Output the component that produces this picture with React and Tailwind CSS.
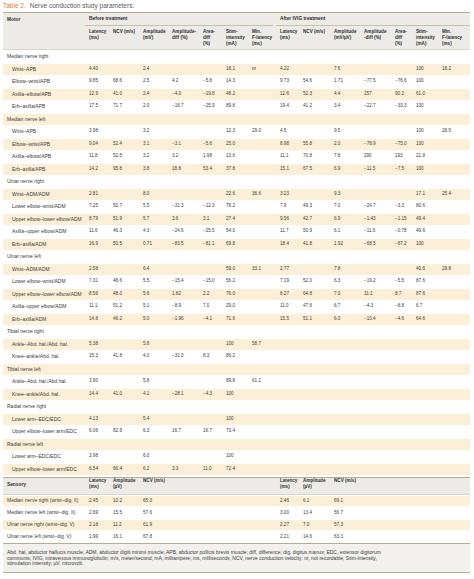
const COLS =
  'grid grid-cols-[82px_24px_30px_29px_31px_23px_26px_28px_23px_31px_30px_31px_21px_26px_32px] items-center'

const motor = [
  {
    title: 'Median nerve right',
    rows: [
      ['Wrist–APB', '4.40', '', '2.4', '', '', '18.1', 'nr', '4.22', '', '7.6', '', '', '100', '18.2'],
      ['Elbow–wrist/APB', '9.85', '68.6', '2.5', '4.2', '−5.6', '14.3', '', '9.73', '54.6', '1.71', '−77.5', '−76.6', '100', ''],
      ['Axilla–elbow/APB', '12.9', '41.0', '2.4', '−4.0', '−19.8', '48.2', '', '12.6', '52.3', '4.4', '157', '90.2', '61.0', ''],
      ['Erb–axilla/APB', '17.5', '71.7', '2.0', '−16.7', '−25.9', '89.8', '', '19.4', '41.2', '3.4', '−22.7', '−33.3', '100', ''],
    ],
  },
  {
    title: 'Median nerve left',
    rows: [
      ['Wrist–APB', '3.98', '', '3.2', '', '', '12.3', '29.0', '4.5', '', '9.5', '', '', '100', '28.5'],
      ['Elbow–wrist/APB', '9.04', '52.4', '3.1', '−3.1', '−5.6', '25.0', '', '8.98', '55.8', '2.0', '−78.9', '−75.0', '100', ''],
      ['Axilla–elbow/APB', '11.8', '52.5', '3.2', '3.2', '1.98', '13.6', '', '11.1', '70.8', '7.8', '290', '193', '21.8', ''],
      ['Erb–axilla/APB', '14.2', '95.8', '3.8', '18.8', '53.4', '37.8', '', '15.1', '67.5', '6.9', '−11.5', '−7.5', '100', ''],
    ],
  },
  {
    title: 'Ulnar nerve right',
    rows: [
      ['Wrist–ADM/ADM', '2.81', '', '8.0', '', '', '22.6', '36.6', '3.23', '', '9.3', '', '', '17.1', '25.4'],
      ['Lower elbow–wrist/ADM', '7.25', '50.7', '5.5', '−31.3', '−12.3', '78.2', '', '7.9', '49.3', '7.0', '−24.7', '−3.3', '80.6', ''],
      ['Upper elbow–lower elbow/ADM', '8.79', '51.9', '5.7', '3.6', '3.1', '27.4', '', '9.56', '42.7', '6.9', '−1.43', '−1.15', '49.4', ''],
      ['Axilla–upper elbow/ADM', '11.6', '46.3', '4.3', '−24.6', '−25.5', '54.0', '', '11.7', '50.9', '6.1', '−11.6', '−0.78', '49.6', ''],
      ['Erb–axilla/ADM', '16.9', '50.5', '0.71', '−83.5', '−81.1', '69.8', '', '18.4', '41.8', '1.92', '−68.5', '−67.2', '100', ''],
    ],
  },
  {
    title: 'Ulnar nerve left',
    rows: [
      ['Wrist–ADM/ADM', '2.58', '', '6.4', '', '', '59.0', '33.1', '2.77', '', '7.8', '', '', '40.6', '29.8'],
      ['Lower elbow–wrist/ADM', '7.31', '48.6', '5.5', '−15.4', '−15.0', '56.2', '', '7.19', '52.0', '6.3', '−19.2', '−5.5', '87.6', ''],
      ['Upper elbow–lower elbow/ADM', '8.56', '48.0', '5.6', '1.82', '2.2', '76.0', '', '8.27', '64.8', '7.0', '11.1', '8.7', '87.6', ''],
      ['Axilla–upper elbow/ADM', '11.1', '51.2', '5.1', '−8.9', '7.0', '29.0', '', '11.0', '47.6', '6.7', '−4.3', '−8.8', '6.7', ''],
      ['Erb–axilla/ADM', '14.8', '46.2', '5.0', '−1.96', '−4.1', '71.6', '', '15.5', '51.1', '6.0', '−10.4', '−4.6', '64.6', ''],
    ],
  },
  {
    title: 'Tibial nerve right',
    rows: [
      ['Ankle–Abd. hal./Abd. hal.', '5.38', '', '5.8', '', '', '100', '58.7'],
      ['Knee–ankle/Abd. hal.', '15.3', '41.8', '4.0', '−31.0', '8.3', '86.2', ''],
    ],
  },
  {
    title: 'Tibial nerve left',
    rows: [
      ['Ankle–Abd. hal./Abd hal.', '3.90', '', '5.8', '', '', '89.8', '61.1'],
      ['Knee–ankle/Abd. hal.', '14.4', '41.0', '4.1', '−28.1', '−4.3', '100', ''],
    ],
  },
  {
    title: 'Radial nerve right',
    rows: [
      ['Lower arm–EDC/EDC', '4.13', '', '5.4', '', '', '100'],
      ['Upper elbow–lower arm/EDC', '6.06', '82.9', '6.3', '16.7', '16.7', '73.4'],
    ],
  },
  {
    title: 'Radial nerve left',
    rows: [
      ['Lower arm–EDC/EDC', '3.98', '', '6.0', '', '', '100'],
      ['Upper elbow–lower arm/EDC', '6.54', '66.4', '6.2', '3.3', '11.0', '72.4'],
    ],
  },
]

const sensory = [
  ['Median nerve right (wrist–dig. II)', '2.45', '10.2', '65.3', '2.46', '6.1', '69.1'],
  ['Median nerve left (wrist–dig. II)', '2.69', '15.5', '57.6', '3.00', '13.4', '56.7'],
  ['Ulnar nerve right (wrist–dig. V)', '2.18', '11.2', '61.9', '2.27', '7.0', '57.3'],
  ['Ulnar nerve left (wrist–dig. V)', '1.99', '16.1', '67.8', '2.21', '14.6', '63.3'],
]

const beforeHead = [
  ['Latency', '(ms)'],
  ['NCV (m/s)'],
  ['Amplitude', '(mV)'],
  ['Amplitude-', 'diff (%)'],
  ['Area-', 'diff', '(%)'],
  ['Stim-', 'intensity', '(mA)'],
  ['Min.', 'F-latency', '(ms)'],
]
const afterHead = [
  ['Latency', '(ms)'],
  ['NCV (m/s)'],
  ['Amplitude', '(mV/µV)'],
  ['Amplitude', '-diff (%)'],
  ['Area-', 'diff', '(%)'],
  ['Stim-', 'intensity', '(mA)'],
  ['Min.', 'F-latency', '(ms)'],
]

function HeadCell({ lines }) {
  return (
    <div className="pl-[4px] self-start whitespace-nowrap font-bold text-[4.6px] leading-[5.8px] text-[#2e2e2e]">
      {lines.map((l, i) => (
        <div key={i}>{l}</div>
      ))}
    </div>
  )
}

function Row({ cells, cream, indent }) {
  const full = [...cells]
  while (full.length < 15) full.push('')
  return (
    <div className="h-[12.5px] py-[0.8px]">
      <div className={`${COLS} h-full ${cream ? 'bg-[#fcefd7]' : ''}`}>
        {full.map((c, i) => (
          <div
            key={i}
            className={
              i === 0
                ? `${indent ? 'pl-[9px]' : 'pl-[4px]'} whitespace-nowrap text-[5px] text-[#3b3b3b]`
                : 'pl-[4px] whitespace-nowrap text-[4.6px] text-[#3b3b3b]'
            }
          >
            {c}
          </div>
        ))}
      </div>
    </div>
  )
}

export default function App() {
  const motorRows = []
  motor.forEach((sec) => {
    motorRows.push({ cells: [sec.title], indent: false })
    sec.rows.forEach((r) => motorRows.push({ cells: r, indent: true }))
  })

  return (
    <div className="w-[474px] h-[579px] bg-white font-['Liberation_Sans',Arial,sans-serif] pl-[3px] pr-[4px]">
      <div className="h-[12px] flex items-center text-[6.5px]">
        <span className="text-[#e27d36]">Table 2.</span>
        <span className="ml-[4px] text-[#5a5a5a]">Nerve conduction study parameters.</span>
      </div>

      <div className="border-t border-[#b7ad8e] bg-[#ecebe7] border-b border-b-[#d8d4c6]">
        <div className={`${COLS} h-[13px]`}>
          <div className="pl-[4px] font-bold text-[4.8px] text-[#2e2e2e]">Motor</div>
          <div className="col-span-7 h-full flex items-center border-b border-[#c9c2aa] mr-[3px] pl-[4px] font-bold text-[4.8px] text-[#2e2e2e]">
            Before treatment
          </div>
          <div className="col-span-7 h-full flex items-center border-b border-[#c9c2aa] pl-[4px] font-bold text-[4.8px] text-[#2e2e2e]">
            After IVIG treatment
          </div>
        </div>
        <div className={`${COLS} h-[23px] pt-[3px]`}>
          <div />
          {beforeHead.map((h, i) => (
            <HeadCell key={'b' + i} lines={h} />
          ))}
          {afterHead.map((h, i) => (
            <HeadCell key={'a' + i} lines={h} />
          ))}
        </div>
      </div>

      <div className="pt-[0.5px] pb-[1.5px] border-b-[1.5px] border-[#b7ad8e]">
        {motorRows.map((r, i) => (
          <Row key={i} cells={r.cells} cream={i % 2 === 1} indent={r.indent} />
        ))}
      </div>

      <div className="bg-[#ecebe7] border-b border-[#d8d4c6]">
        <div className={`${COLS} h-[16px]`}>
          <div className="pl-[4px] self-start pt-[3px] font-bold text-[4.8px] text-[#2e2e2e]">Sensory</div>
          <HeadCell lines={['Latency', '(ms)']} />
          <HeadCell lines={['Amplitude', '(µV)']} />
          <HeadCell lines={['NCV (m/s)']} />
          <div />
          <div />
          <div />
          <div />
          <HeadCell lines={['Latency', '(ms)']} />
          <HeadCell lines={['Amplitude', '(µV)']} />
          <HeadCell lines={['NCV (m/s)']} />
        </div>
      </div>

      <div className="border-b border-[#b7ad8e]">
        {sensory.map((s, i) => (
          <div key={i} className="h-[12px] py-[0.8px]">
            <div className={`${COLS} h-full ${i % 2 === 0 ? 'bg-[#fcefd7]' : ''}`}>
              <div className="pl-[4px] whitespace-nowrap text-[5px] text-[#3b3b3b]">{s[0]}</div>
              {[s[1], s[2], s[3], '', '', '', '', s[4], s[5], s[6]].map((c, j) => (
                <div key={j} className="pl-[4px] whitespace-nowrap text-[4.6px] text-[#3b3b3b]">
                  {c}
                </div>
              ))}
            </div>
          </div>
        ))}
      </div>

      <div className="bg-[#f2f1ee] border-b border-[#b7ad8e] px-[4px] pt-[6px] pb-[5px] text-[5px] leading-[5.5px] text-[#3b3b3b] whitespace-nowrap">
        Abd. hal, abductor hallucis muscle; ADM, abductor digiti minimi muscle; APB, abductor pollicis brevis muscle; diff, difference; dig, digitus manus; EDC, extensor digitorum
        <br />
        communis; IVIG, intravenous immunoglobulin; m/s, meter/second; mA, milliampere; ms, milliseconds; NCV, nerve conduction velocity; nr, not recordable; Stim-intensity,
        <br />
        stimulation intensity; µV, microvolt.
      </div>
    </div>
  )
}
